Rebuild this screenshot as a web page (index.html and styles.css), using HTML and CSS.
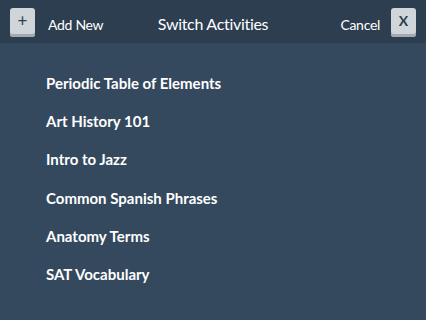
FILE: index.html
```html
<!DOCTYPE html>
<html lang="en">
<head>
  <meta charset="UTF-8">
  <title>Switch Activities</title>
  <link rel="stylesheet" href="styles.css">
</head>
<body>
  <div class="header">
    <div class="side">
      <button class="key plus">+</button>
      <span class="link">Add New</span>
    </div>
    <h1>Switch Activities</h1>
    <div class="side right">
      <span class="link">Cancel</span>
      <button class="key">X</button>
    </div>
  </div>
  <ul class="activities">
    <li>Periodic Table of Elements</li>
    <li>Art History 101</li>
    <li>Intro to Jazz</li>
    <li>Common Spanish Phrases</li>
    <li>Anatomy Terms</li>
    <li>SAT Vocabulary</li>
  </ul>
</body>
</html>
```

FILE: styles.css
```css
body {
  margin: 0;
  font-family: Lato, "Open Sans", sans-serif;
  background-color: #34495e;
  color: #fff;
  height: 320px;
}

.header {
  height: 43px;
  background-color: #2c3e50;
  display: flex;
  align-items: center;
  justify-content: space-between;
  padding: 0 10px;
  box-sizing: border-box;
}

.side {
  display: flex;
  align-items: center;
  gap: 13px;
  width: 120px;
}

.side.right {
  justify-content: flex-end;
  gap: 11px;
}

.key {
  width: 25px;
  height: 29px;
  margin-top: 1px;
  padding: 0 0 3px;
  border: none;
  border-radius: 3px;
  background-color: #d0d5d9;
  box-shadow: inset 0 -3px 0 #a3a9ae;
  color: #2c3e50;
  font-family: Lato, sans-serif;
  font-size: 14px;
  font-weight: bold;
}

.key.plus {
  font-size: 17px;
  font-weight: normal;
}

.link {
  padding-top: 5px;
  font-size: 14px;
  letter-spacing: -0.3px;
}

h1 {
  margin: 0;
  padding-top: 4px;
  font-size: 16px;
  font-weight: normal;
  letter-spacing: -0.3px;
}

.activities {
  list-style: none;
  margin: 0;
  padding: 28px 0 0 46px;
}

.activities li {
  height: 38.2px;
  line-height: 24px;
  font-size: 15px;
  font-weight: bold;
}
```
